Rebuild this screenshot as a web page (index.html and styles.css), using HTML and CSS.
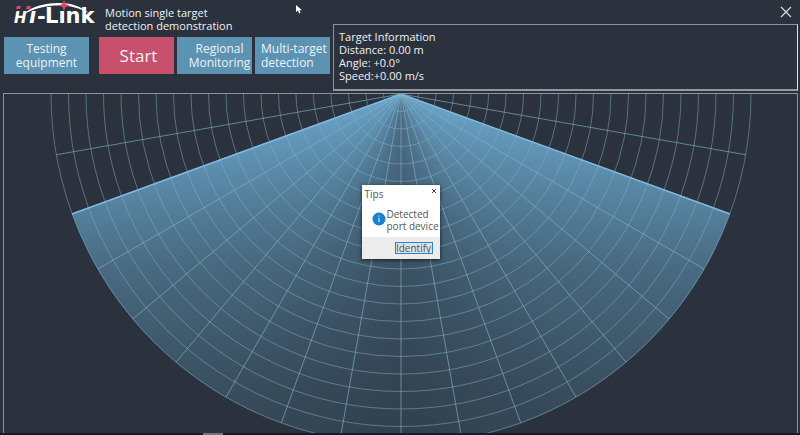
FILE: index.html
```html
<!DOCTYPE html>
<html lang="en">
<head>
<meta charset="utf-8">
<title>Motion single target detection demonstration</title>
<meta name="viewport" content="width=device-width, initial-scale=1">
<link rel="stylesheet" href="styles.css">
</head>
<body>
<header class="header">
  <div class="controls">
    <div class="brand">
      <svg class="logo" viewBox="0 0 84 28" role="img" aria-label="Hi-Link">
        <text class="logo-text logo-slant" y="23"><tspan class="logo-small" x="0">H</tspan><tspan x="15">ı</tspan></text>
        <text class="logo-text" x="23" y="24">-</text>
        <text class="logo-text" x="31" y="23">Lınk</text>
        <path class="logo-swoosh" d="M9 15C15 7 31 3 44 3C58 3 66 6 75 13C65 8 57 5.500 45 5.500C32 5.500 20 8 9 15Z"/>
        <path class="logo-accent" d="M50 0l1.500 4 4 1.500-4 1.500-1.500 4-1.500-4-4-1.500 4-1.500zM3 6h4l-1 3h-4zM13 6h4l-1 3h-4z"/>
      </svg>
      <h1 class="title">Motion single target<br>detection demonstration</h1>
    </div>
    <nav class="toolbar">
      <button class="btn btn-wide" type="button">Testing<br>equipment</button>
      <button class="btn btn-start" type="button">Start</button>
      <button class="btn btn-right" type="button">Regional<br>Monitoring</button>
      <button class="btn btn-left" type="button">Multi-target<br>detection</button>
    </nav>
  </div>
  <div class="status">
    <div class="window-bar">
      <button class="close" type="button" aria-label="Close">
        <svg viewBox="0 0 12 12"><path d="M1 1l10 10M11 1L1 11"/></svg>
      </button>
    </div>
    <section class="info">
      <h2>Target Information</h2>
      <p>Distance: 0.00 m</p>
      <p>Angle: +0.0°</p>
      <p>Speed:+0.00 m/s</p>
    </section>
  </div>
</header>
<main class="plot">
  <svg class="radar" viewBox="0 0 793 339" preserveAspectRatio="xMidYMin slice" role="img" aria-label="Radar view">
    <foreignObject x="46" y="-351" width="702" height="702">
      <div class="sweep"></div>
    </foreignObject>
    <g class="rings" id="rings"></g>
    <g class="rays" id="rays"></g>
    <path class="edge" d="M68 120L397 0L726 120"/>
  </svg>
  <section class="dialog" role="dialog" aria-labelledby="tips">
    <div class="dialog-head">
      <h2 id="tips">Tips</h2>
      <button class="dialog-close" type="button" aria-label="Dismiss">
        <svg viewBox="0 0 6 6"><path d="M1 1l4 4M5 1L1 5"/></svg>
      </button>
    </div>
    <div class="dialog-body">
      <svg class="info-icon" viewBox="0 0 14 14"><circle cx="7" cy="7" r="6.5"/><path d="M7 6v4M7 3.500v1.200"/></svg>
      <p>Detected<br>port device</p>
    </div>
    <div class="dialog-foot"><button class="identify" type="button">Identify</button></div>
  </section>
</main>
<footer class="splitter"><span class="grip"></span></footer>
<svg class="cursor" viewBox="0 0 6 9"><path d="M0 0v7l2-1.500 1 3 1.500-.6-1-2.700H6z"/></svg>
<script src="radar.js"></script>
</body>
</html>
```
FILE: styles.css
```css
* { box-sizing: border-box; }
body {
  margin: 0;
  min-height: 100vh;
  display: flex;
  flex-direction: column;
  background: #2b313d;
  color: #eef2f6;
  font: 11px/13px "Open Sans", "Noto Sans", sans-serif;
}
h1, h2, p { margin: 0; font-size: inherit; font-weight: 400; }
button { font: inherit; color: inherit; border: 0; padding: 0; }
svg { display: block; }

.header { display: flex; gap: 3px; padding: 0 2px 2px 4px; }
.controls { flex: none; }
.brand { display: flex; height: 37px; padding-left: 10px; gap: 7px; }
.logo { width: 84px; height: 28px; }
.logo-text { font: bold 21px "DejaVu Sans", sans-serif; fill: #fff; }
.logo-slant { font-style: oblique; }
.logo-small { font-size: 15px; }
.logo-swoosh { fill: #fff; }
.logo-accent { fill: #d9486c; }
.title { padding-top: 6px; }

.toolbar { display: flex; gap: 3px; }
.btn {
  width: 75px;
  height: 37px;
  background: #5c93b3;
  font-size: 12px;
  line-height: 14px;
  white-space: nowrap;
}
.btn-wide { width: 85px; margin-right: 7px; }
.btn-start { padding-left: 4px; background: #c9506d; font-size: 17px; }
.btn-right { padding-left: 10px; }
.btn-left { padding-left: 6px; text-align: left; }

.status { flex: 1; display: flex; flex-direction: column; }
.window-bar { display: flex; justify-content: flex-end; height: 24px; padding: 6px 6px 0 0; }
.close { width: 12px; height: 12px; background: none; }
.close path { fill: none; stroke: #d5d9de; stroke-width: 1.3; }
.info {
  flex: 1;
  padding: 5px 5px 7px;
  border: 1px solid #8d949d;
  border-right-color: #dfe3e7;
  border-bottom: 2px solid #9298a1;
}

.plot {
  position: relative;
  flex: 1;
  display: flex;
  min-height: 300px;
  margin: 0 2px 0 3px;
  border: 1px solid #7f989e;
  border-bottom: 0;
  overflow: hidden;
}
.radar { position: absolute; inset: 0; width: 100%; height: 100%; }
.sweep {
  width: 702px;
  height: 702px;
  background:
    conic-gradient(from 110deg, rgba(43, 49, 61, 0) 0deg, rgba(43, 49, 61, .12) 35deg, rgba(43, 49, 61, .48) 70deg, rgba(43, 49, 61, .12) 105deg, rgba(43, 49, 61, 0) 140deg),
    linear-gradient(#6ba6cc 351px, #547f9b 470px, #4a6d84 525px, #3b5364 647px, #374c5b 702px);
  clip-path: path("M22 471A350 350 0 0 0 680 471L351 351Z");
}
.rings circle, .rays line { fill: none; stroke: #7fb3c8; }
.rings circle { stroke-opacity: .5; }
.rays line { stroke-opacity: .65; }
.edge { fill: none; stroke: #7fb8df; stroke-width: 1.5; }

.dialog {
  position: relative;
  width: 78px;
  margin: 91px auto auto;
  background: #fff;
  color: #555;
  box-shadow: 0 1px 4px rgba(0, 0, 0, .7);
  font-size: 10px;
  line-height: 12px;
}
.dialog-head { display: flex; justify-content: space-between; padding: 3px 3px 0; }
.dialog-close { width: 6px; height: 6px; background: none; }
.dialog-close path { fill: none; stroke: #444; }
.dialog-body { display: flex; gap: 1px; padding: 8px 0 5px 10px; white-space: nowrap; }
.info-icon { flex: none; width: 14px; height: 14px; margin-top: 4px; }
.info-icon circle { fill: #1b7fd3; }
.info-icon path { stroke: #fff; }
.dialog-foot { display: flex; justify-content: flex-end; padding: 5px 7px; background: #ececec; }
.identify {
  width: 38px;
  height: 12px;
  border: 1px solid #2a84cb;
  background: #dde3e8;
  line-height: 10px;
  overflow: hidden;
}

.splitter { height: 2px; padding-left: 203px; background: #161d29; }
.grip { display: block; width: 20px; height: 2px; background: #6d7780; }
.cursor { position: absolute; left: 296px; top: 5px; width: 6px; height: 9px; fill: #fff; }
```
FILE: radar.js
```js
const NS = "http://www.w3.org/2000/svg";
const cx = 397, cy = 0, radius = 350, ringCount = 20;

function add(parent, tag, attrs) {
  const node = document.createElementNS(NS, tag);
  for (const key in attrs) node.setAttribute(key, attrs[key]);
  document.getElementById(parent).appendChild(node);
}

for (let i = 1; i <= ringCount; i++) {
  add("rings", "circle", { cx, cy, r: radius * i / ringCount });
}
for (let deg = 10; deg <= 170; deg += 10) {
  const a = deg * Math.PI / 180;
  add("rays", "line", { x1: cx, y1: cy, x2: cx + radius * Math.cos(a), y2: cy + radius * Math.sin(a) });
}
```
